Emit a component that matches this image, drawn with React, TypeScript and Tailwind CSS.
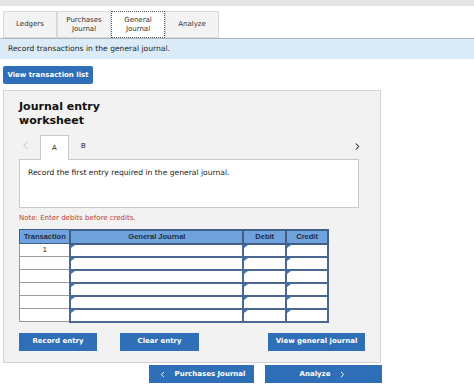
import { ChevronLeft, ChevronRight } from "lucide-react";

const tabs = [
  { label: ["Ledgers"], active: false },
  { label: ["Purchases", "Journal"], active: false },
  { label: ["General", "Journal"], active: true },
  { label: ["Analyze"], active: false },
];

const rows = ["1", "", "", "", "", ""];

const Arrow = () => (
  <span className="absolute left-0 top-0 h-0 w-0 border-l-[4px] border-b-[3px] border-l-[#3b78c4] border-b-transparent" />
);

const App = () => {
  return (
    <div className="relative h-[388px] w-[474px] overflow-hidden bg-white font-['DejaVu_Sans',sans-serif] text-[#222]">
      <div className="h-[6px] bg-[#e4e4e4]" />

      <div className="mt-[5px] flex h-[27px] pl-[3px]">
        {tabs.map((t, i) => (
          <div
            key={i}
            className={
              t.active
                ? "flex w-[54px] flex-col items-center justify-center border border-dotted border-[#555] bg-white text-[7px] leading-[9px] text-[#333]"
                : "flex w-[54px] flex-col items-center justify-center border border-[#d9d9d9] bg-[#f3f3f3] text-[7px] leading-[9px] text-[#333]"
            }
          >
            {t.label.map((l) => (
              <span key={l}>{l}</span>
            ))}
          </div>
        ))}
      </div>

      <div className="flex h-[21px] items-center border-t border-[#a8b6c4] bg-[#dbecf8] px-[8px] text-[7.6px]">
        Record transactions in the general journal.
      </div>

      <button className="ml-[3px] mt-[7px] flex h-[18px] w-[90px] items-center justify-center rounded-[2px] bg-[#2f6fb7] text-[7px] font-bold text-white">
        View transaction list
      </button>

      <div className="ml-[3px] mt-[6px] h-[273px] w-[378px] border border-[#d3d3d3] bg-[#f2f2f2] pl-[15px]">
        <h1 className="mt-[9px] text-[11px] font-bold leading-[14px] text-[#111]">
          Journal entry
          <br />
          worksheet
        </h1>

        <div className="mt-[6px] flex h-[25px] w-[340px] items-end">
          <span className="mb-[7px] w-[21px]">
            <ChevronLeft size={13} strokeWidth={1.3} className="text-[#aaa]" />
          </span>
          <div className="-mb-px flex h-[25px] w-[29px] items-center justify-center border border-b-0 border-[#c9c9c9] bg-white text-[7px] text-[#222]">
            A
          </div>
          <div className="flex h-[25px] w-[29px] items-center justify-center text-[7px] text-[#222]">B</div>
          <span className="mb-[7px] ml-auto mr-[-4px]">
            <ChevronRight size={11} strokeWidth={2.2} className="text-[#222]" />
          </span>
        </div>

        <div className="h-[49px] w-[340px] border border-[#c9c9c9] bg-white px-[8px] pt-[7px] text-[7.6px]">
          Record the first entry required in the general journal.
        </div>

        <p className="mt-[5px] text-[7px] text-[#c0392b]">Note: Enter debits before credits.</p>

        <table className="mt-[5px] w-[310px] border-collapse font-['Liberation_Sans',sans-serif] text-[7.5px]">
          <thead>
            <tr className="h-[14px] bg-[#70a3de] font-bold text-[#1f2d3d]">
              <th className="w-[51px] border border-[#3f5f86]">Transaction</th>
              <th className="w-[174px] border-[2px] border-[#3f5f86]">General Journal</th>
              <th className="w-[43px] border-[2px] border-[#3f5f86]">Debit</th>
              <th className="w-[42px] border-[2px] border-[#3f5f86]">Credit</th>
            </tr>
          </thead>
          <tbody>
            {rows.map((r, i) => (
              <tr key={i} className="h-[13px] bg-white">
                <td className="border border-[#9a9a9a] text-center">{r}</td>
                <td className="relative border-[2px] border-[#4b6890]">
                  <Arrow />
                </td>
                <td className="relative border-[2px] border-[#4b6890]">
                  <Arrow />
                </td>
                <td className="relative border-[2px] border-[#4b6890]">
                  <Arrow />
                </td>
              </tr>
            ))}
          </tbody>
        </table>

        <div className="mt-[10px] flex w-[346px] items-center">
          <button className="flex h-[18px] w-[78px] items-center justify-center bg-[#2f6fb7] text-[7px] font-bold text-white">
            Record entry
          </button>
          <button className="ml-[23px] flex h-[18px] w-[79px] items-center justify-center bg-[#2f6fb7] text-[7px] font-bold text-white">
            Clear entry
          </button>
          <button className="ml-auto flex h-[18px] w-[97px] items-center justify-center bg-[#2f6fb7] text-[7px] font-bold text-white">
            View general journal
          </button>
        </div>
      </div>

      <div className="mt-[2px] flex pl-[149px]">
        <button className="flex h-[18px] w-[105px] items-center justify-center gap-[8px] bg-[#2f6fb7] text-[7px] font-bold text-white">
          <ChevronLeft size={9} strokeWidth={2.5} />
          Purchases Journal
        </button>
        <button className="ml-[11px] flex h-[18px] w-[117px] items-center justify-center gap-[8px] bg-[#2f6fb7] text-[7px] font-bold text-white">
          Analyze
          <ChevronRight size={9} strokeWidth={2.5} />
        </button>
      </div>
    </div>
  );
};

export default App;
